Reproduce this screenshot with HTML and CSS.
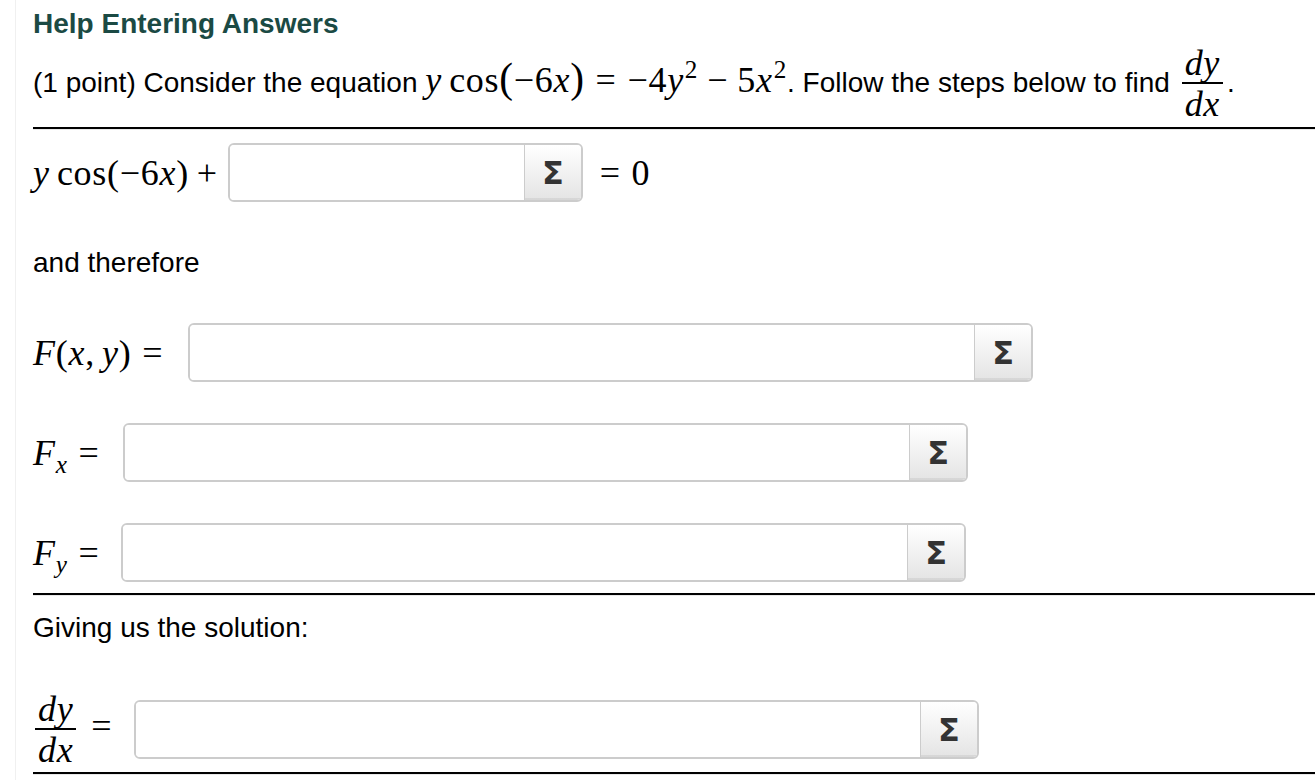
FILE: index.html
```html
<!DOCTYPE html>
<html lang="en">
<head>
<meta charset="utf-8">
<title>Help Entering Answers</title>
<link rel="stylesheet" href="styles.css">
</head>
<body>
<div class="page">
  <h2 class="help">Help Entering Answers</h2>

  <p class="intro">(1 point) Consider the equation <span class="math"><i>y</i><span class="op-thin"></span>cos<span class="bigp">(</span>−6<i>x</i><span class="bigp">)</span><span class="rel">=</span>−4<i>y</i><sup>2</sup><span class="bin">−</span>5<i>x</i><sup>2</sup></span>. Follow the steps below to find <span class="math"><span class="frac"><span class="num"><i>dy</i></span><span class="den"><i>dx</i></span></span></span>.</p>

  <hr class="rule">

  <div class="row row-first">
    <span class="math"><i>y</i><span class="op-thin"></span>cos(−6<i>x</i>)<span class="bin-r">+</span></span>
    <span class="ans ans-short"><input class="field" type="text"><span class="sigma">Σ</span></span>
    <span class="math after"><span class="rel">=</span>0</span>
  </div>

  <p class="text text-therefore">and therefore</p>

  <div class="row row-f">
    <span class="math"><i>F</i>(<i>x</i>,<span class="comma-sp"></span><i>y</i>)<span class="rel">=</span></span>
    <span class="ans ans-long gap-f"><input class="field" type="text"><span class="sigma">Σ</span></span>
  </div>

  <div class="row row-fx">
    <span class="math"><i>F</i><sub><i>x</i></sub><span class="rel">=</span></span>
    <span class="ans ans-long gap-fx"><input class="field" type="text"><span class="sigma">Σ</span></span>
  </div>

  <div class="row row-fy">
    <span class="math"><i>F</i><sub><i>y</i></sub><span class="rel">=</span></span>
    <span class="ans ans-long gap-fy"><input class="field" type="text"><span class="sigma">Σ</span></span>
  </div>

  <hr class="rule rule-mid">

  <p class="text text-giving">Giving us the solution:</p>

  <div class="row row-dydx">
    <span class="math"><span class="frac frac-big"><span class="num"><i>dy</i></span><span class="den"><i>dx</i></span></span><span class="rel">=</span></span>
    <span class="ans ans-long gap-dydx"><input class="field" type="text"><span class="sigma">Σ</span></span>
  </div>

  <hr class="rule rule-end">
</div>
</body>
</html>
```

FILE: styles.css
```css
* { box-sizing: border-box; }

html, body {
  margin: 0;
  background: #ffffff;
}

body {
  font-family: "Liberation Sans", Arial, sans-serif;
  font-size: 28px;
  color: #000000;
}

.page {
  margin-left: 15px;
  border-left: 1px solid #f0f0f0;
  padding-left: 17px;
  min-height: 780px;
  overflow: hidden;
}

.help {
  margin: 0;
  padding-top: 8px;
  font-size: 28px;
  line-height: 32px;
  font-weight: bold;
  color: #1b4a44;
}

.intro {
  margin: 5px 0 0;
  line-height: 32px;
  white-space: nowrap;
}

.math {
  font-family: "Liberation Serif", "Times New Roman", serif;
  font-size: 36px;
  letter-spacing: 0.02em;
  white-space: nowrap;
}

.math i {
  font-style: italic;
}

.math sup {
  font-size: 0.7em;
  vertical-align: 0.55em;
  line-height: 0;
  margin-left: 1px;
}

.math sub {
  font-size: 0.7em;
  vertical-align: -0.3em;
  line-height: 0;
}

.op-thin { display: inline-block; width: 0.2em; }
.comma-sp { display: inline-block; width: 0.2em; }

.bigp {
  display: inline-block;
  font-size: 1.15em;
  line-height: 0;
}

.rel {
  display: inline-block;
  margin: 0 0.3em;
}

.bin {
  display: inline-block;
  margin: 0 0.25em;
}

.bin-r {
  display: inline-block;
  margin-left: 0.22em;
}

.frac {
  display: inline-flex;
  flex-direction: column;
  align-items: center;
  vertical-align: middle;
  margin: 0 4px;
  line-height: 1.0;
}

.frac .num {
  padding: 0 3px 1px;
  border-bottom: 2px solid #000;
}

.frac .den {
  padding: 2px 3px 0;
}

.rule {
  margin: 5px 0 0;
  border: 0;
  border-top: 2px solid #000;
  border-bottom: 1px solid #e8e8e8;
  height: 0;
  width: 100%;
}

.row {
  display: flex;
  align-items: center;
  height: 59px;
}

.row-first { margin-top: 13px; }
.row-f { margin-top: 44px; }
.row-fx { margin-top: 41px; }
.row-fy { margin-top: 41px; }
.row-dydx { margin-top: 56px; }

.rule-mid { margin-top: 11px; }
.rule-end { margin-top: 13px; }

.text {
  margin: 0;
  line-height: 32px;
}

.text-therefore { margin-top: 45px; }
.text-giving { margin-top: 16px; }

.ans {
  display: flex;
  height: 59px;
  border: 2px solid #cccccc;
  border-radius: 6px;
  overflow: hidden;
  flex: none;
}

.ans-short { width: 355px; margin-left: 10px; }
.ans-long { width: 845px; }
.gap-f { margin-left: 14px; }
.gap-fx { margin-left: 13px; }
.gap-fy { margin-left: 11px; }
.gap-dydx { margin-left: 11px; }

.field {
  flex: 1;
  min-width: 0;
  border: 0;
  outline: none;
  background: #ffffff;
  font: inherit;
}

.sigma {
  width: 57px;
  flex: none;
  display: flex;
  align-items: center;
  justify-content: center;
  border-left: 1px solid #cccccc;
  background: linear-gradient(#ffffff, #e4e4e4);
  box-shadow: inset 0 -2px 0 rgba(0, 0, 0, 0.06);
  font-family: "DejaVu Sans", sans-serif;
  font-weight: bold;
  font-size: 32px;
  color: #333333;
}

.after {
  margin-left: 6px;
}

.frac-big {
  margin-left: 2px;
}
```
